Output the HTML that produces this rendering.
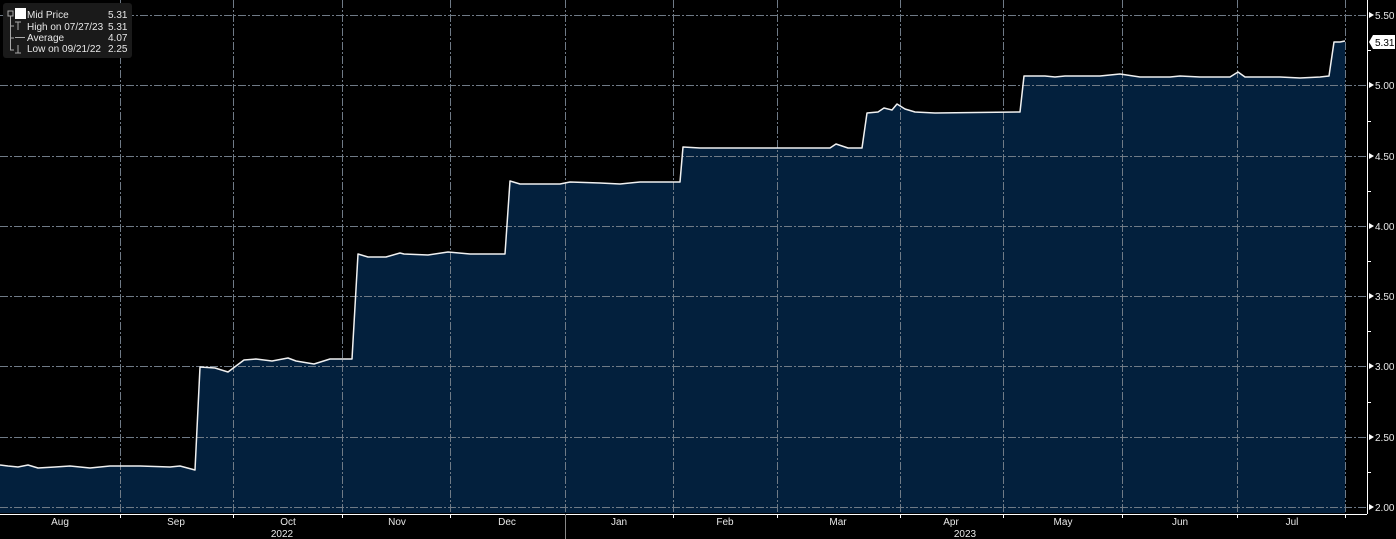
<!DOCTYPE html>
<html><head><meta charset="utf-8"><style>
html,body{margin:0;padding:0;background:#000;width:1396px;height:539px;overflow:hidden}
svg text{font-family:"Liberation Sans",sans-serif;fill:#e8e8e8}
</style></head><body>
<svg width="1396" height="539" viewBox="0 0 1396 539" xmlns="http://www.w3.org/2000/svg">
<defs></defs>
<polygon fill="#03203d" points="0,465 8,466 18,467 28,465 38,468 55,467 70,466 90,468 110,466 140,466 170,467 180,466 195,470 200,367 215,368 228,372 236,366 244,360 256,359 272,361 288,358 296,361 314,364 330,359 352,359 358,254 368,257 386,257 400,253 404,254 428,255 448,252 470,254 505,254 510,181 520,184 560,184 570,182 600,183 620,184 640,182 680,182 683,147 700,148 830,148 836,144 848,148 862,148 867,113 878,112 884,108 892,110 897,104 905,109 915,112 935,113 1020,112 1024,76 1045,76 1055,77 1065,76 1100,76 1120,74 1140,77 1170,77 1180,76 1200,77 1230,77 1238,72 1245,77 1280,77 1300,78 1320,77 1329,76 1334,42 1340,42 1345,41 1345,513 0,513"/>
<g stroke="#6f7a86" stroke-width="1" stroke-dasharray="8,2,2,2" fill="none">
<line x1="0" y1="15.5" x2="1367" y2="15.5"/><line x1="0" y1="85.5" x2="1367" y2="85.5"/><line x1="0" y1="156.5" x2="1367" y2="156.5"/><line x1="0" y1="226.5" x2="1367" y2="226.5"/><line x1="0" y1="296.5" x2="1367" y2="296.5"/><line x1="0" y1="366.5" x2="1367" y2="366.5"/><line x1="0" y1="437.5" x2="1367" y2="437.5"/><line x1="0" y1="507.5" x2="1367" y2="507.5"/>
<line x1="120.5" y1="0" x2="120.5" y2="514"/><line x1="233.5" y1="0" x2="233.5" y2="514"/><line x1="342.5" y1="0" x2="342.5" y2="514"/><line x1="450.5" y1="0" x2="450.5" y2="514"/><line x1="565.5" y1="0" x2="565.5" y2="514"/><line x1="673.5" y1="0" x2="673.5" y2="514"/><line x1="777.5" y1="0" x2="777.5" y2="514"/><line x1="900.5" y1="0" x2="900.5" y2="514"/><line x1="1003.5" y1="0" x2="1003.5" y2="514"/><line x1="1122.5" y1="0" x2="1122.5" y2="514"/><line x1="1237.5" y1="0" x2="1237.5" y2="514"/><line x1="1345.5" y1="0" x2="1345.5" y2="514"/>
</g>
<polyline fill="none" stroke="#f0f0f0" stroke-width="1.5" stroke-linejoin="round" points="0,465 8,466 18,467 28,465 38,468 55,467 70,466 90,468 110,466 140,466 170,467 180,466 195,470 200,367 215,368 228,372 236,366 244,360 256,359 272,361 288,358 296,361 314,364 330,359 352,359 358,254 368,257 386,257 400,253 404,254 428,255 448,252 470,254 505,254 510,181 520,184 560,184 570,182 600,183 620,184 640,182 680,182 683,147 700,148 830,148 836,144 848,148 862,148 867,113 878,112 884,108 892,110 897,104 905,109 915,112 935,113 1020,112 1024,76 1045,76 1055,77 1065,76 1100,76 1120,74 1140,77 1170,77 1180,76 1200,77 1230,77 1238,72 1245,77 1280,77 1300,78 1320,77 1329,76 1334,42 1340,42 1345,41"/>
<line x1="1367.5" y1="0" x2="1367.5" y2="514" stroke="#fff"/>
<line x1="0" y1="514.5" x2="1367" y2="514.5" stroke="#fff"/>
<g stroke="#fff"><line x1="120.5" y1="514" x2="120.5" y2="518"/><line x1="233.5" y1="514" x2="233.5" y2="518"/><line x1="342.5" y1="514" x2="342.5" y2="518"/><line x1="450.5" y1="514" x2="450.5" y2="518"/><line x1="565.5" y1="514" x2="565.5" y2="539" stroke="#888"/><line x1="673.5" y1="514" x2="673.5" y2="518"/><line x1="777.5" y1="514" x2="777.5" y2="518"/><line x1="900.5" y1="514" x2="900.5" y2="518"/><line x1="1003.5" y1="514" x2="1003.5" y2="518"/><line x1="1122.5" y1="514" x2="1122.5" y2="518"/><line x1="1237.5" y1="514" x2="1237.5" y2="518"/><line x1="1345.5" y1="514" x2="1345.5" y2="518"/>
<line x1="1367" y1="50.5" x2="1371" y2="50.5"/><line x1="1367" y1="121.5" x2="1371" y2="121.5"/><line x1="1367" y1="191.5" x2="1371" y2="191.5"/><line x1="1367" y1="261.5" x2="1371" y2="261.5"/><line x1="1367" y1="331.5" x2="1371" y2="331.5"/><line x1="1367" y1="402.5" x2="1371" y2="402.5"/><line x1="1367" y1="472.5" x2="1371" y2="472.5"/></g>
<g font-size="10" text-anchor="middle">
<text x="60" y="525">Aug</text><text x="176" y="525">Sep</text><text x="288" y="525">Oct</text><text x="397" y="525">Nov</text><text x="507" y="525">Dec</text><text x="619" y="525">Jan</text><text x="725" y="525">Feb</text><text x="838" y="525">Mar</text><text x="951" y="525">Apr</text><text x="1063" y="525">May</text><text x="1180" y="525">Jun</text><text x="1292" y="525">Jul</text>
<text x="282" y="537">2022</text><text x="965" y="537">2023</text></g>
<g font-size="10" fill="#fff">
<polygon points="1369,12 1374,15 1369,18" fill="#fff"/><text x="1375" y="19">5.50</text>
<polygon points="1369,82 1374,85 1369,88" fill="#fff"/><text x="1375" y="89">5.00</text>
<polygon points="1369,153 1374,156 1369,159" fill="#fff"/><text x="1375" y="160">4.50</text>
<polygon points="1369,223 1374,226 1369,229" fill="#fff"/><text x="1375" y="230">4.00</text>
<polygon points="1369,293 1374,296 1369,299" fill="#fff"/><text x="1375" y="300">3.50</text>
<polygon points="1369,363 1374,366 1369,369" fill="#fff"/><text x="1375" y="370">3.00</text>
<polygon points="1369,434 1374,437 1369,440" fill="#fff"/><text x="1375" y="441">2.50</text>
<polygon points="1369,504 1374,507 1369,510" fill="#fff"/><text x="1375" y="511">2.00</text>
</g>
<polygon points="1369,42 1373,35 1395,35 1395,49 1373,49" fill="#fff"/>
<text x="1375" y="46" font-size="10" style="fill:#000">5.31</text>
<rect x="3" y="3" width="129" height="55" rx="3" fill="#1a1a1a"/>
<g stroke="#aaa" fill="none"><rect x="8" y="11" width="5" height="5"/><line x1="10.5" y1="16" x2="10.5" y2="50"/><line x1="10" y1="26" x2="14" y2="26"/><line x1="10" y1="38" x2="14" y2="38"/><line x1="10" y1="50" x2="14" y2="50"/>
<line x1="18" y1="22" x2="18" y2="30"/><line x1="15" y1="22" x2="21" y2="22"/><line x1="15" y1="37.5" x2="25" y2="37.5"/><line x1="18" y1="45" x2="18" y2="53"/><line x1="15" y1="53" x2="21" y2="53"/></g>
<rect x="15" y="8" width="11" height="11" fill="#fff"/>
<g font-size="10" fill="#fff"><text x="27" y="18">Mid Price</text><text x="27" y="30">High on 07/27/23</text><text x="27" y="41">Average</text><text x="27" y="52">Low on 09/21/22</text>
<text x="108" y="18">5.31</text><text x="108" y="30">5.31</text><text x="108" y="41">4.07</text><text x="108" y="52">2.25</text></g>
</svg>
</body></html>
